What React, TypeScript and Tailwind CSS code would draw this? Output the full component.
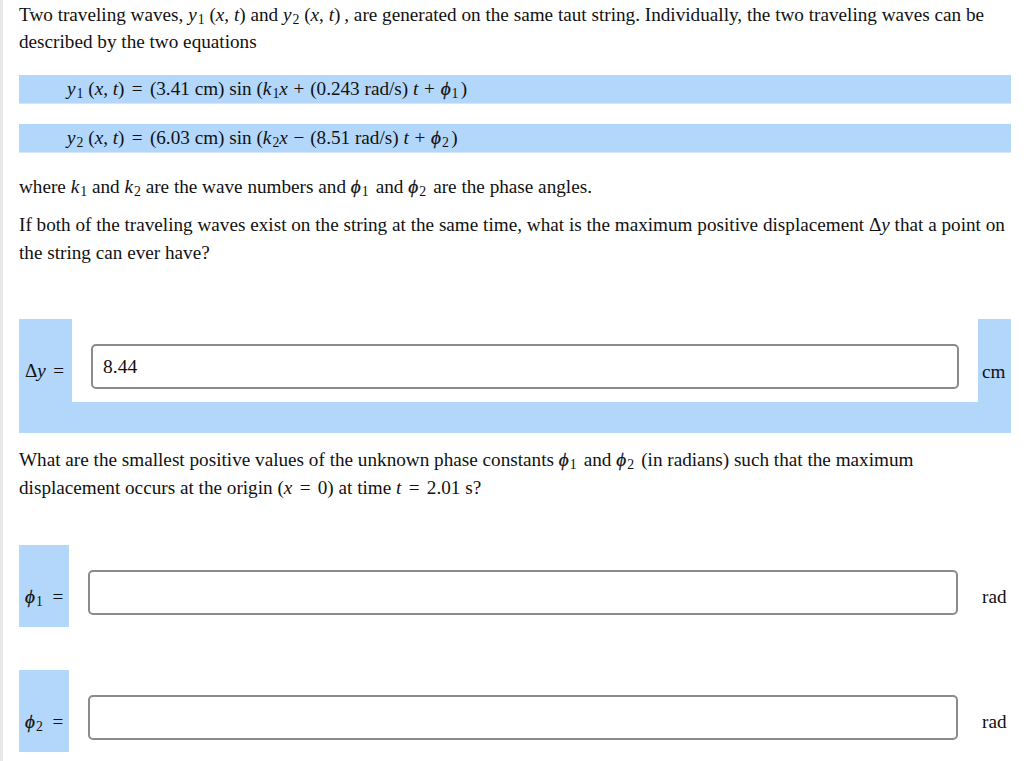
import React from 'react';

const I = ({ children }: { children: React.ReactNode }) => <i className="italic">{children}</i>;

const Sub = ({ children }: { children: React.ReactNode }) => (
  <sub className="text-[0.72em] not-italic ml-px">{children}</sub>
);

// relation / binary operator spacing like typeset math
const Rel = ({ children }: { children: React.ReactNode }) => <span className="mx-[0.38em]">{children}</span>;
const Bin = ({ children }: { children: React.ReactNode }) => <span className="mx-[0.3em]">{children}</span>;

const Phi = ({ n }: { n: string }) => (
  <span className="pr-[0.12em]">
    <i className="italic [-webkit-text-stroke:0.3px_currentColor]">ϕ</i>
    <Sub>{n}</Sub>
  </span>
);

const Yn = ({ n }: { n: string }) => (
  <span>
    <I>y</I>
    <Sub>{n}</Sub>
  </span>
);

const Kn = ({ n }: { n: string }) => (
  <span>
    <I>k</I>
    <Sub>{n}</Sub>
  </span>
);

const AnswerInput = ({ value }: { value?: string }) => (
  <input
    defaultValue={value}
    className="w-full h-[45px] border-2 border-[#8b8b8b] rounded-[5px] pl-[10px] text-[19.5px] text-[#111] bg-white outline-none font-['Liberation_Serif',serif]"
  />
);

export default function App() {
  return (
    <div className="min-h-[761px] bg-white border-l-[3px] border-[#e8e8e8] pl-4 pr-[13px] pt-px font-['Liberation_Serif','DejaVu_Serif',serif] text-[19.2px] leading-[27px] text-[#111]">
      <p>
        Two traveling waves, <Yn n="1" /> (<I>x</I>, <I>t</I>) and <Yn n="2" /> (<I>x</I>, <I>t</I>)&thinsp;, are
        generated on the same taut string. Individually, the two traveling waves can be described by the two equations
      </p>

      <div className="mt-5 h-[29px] bg-[#b3d7fb] border-b border-[#d3e6fb] pl-12 leading-[28px]">
        <Yn n="1" /> (<I>x</I>, <I>t</I>)<Rel>=</Rel>(3.41 cm) sin (<Kn n="1" />
        <I>x</I>
        <Bin>+</Bin>(0.243 rad/s) <I>t</I>
        <Bin>+</Bin>
        <Phi n="1" />)
      </div>

      <div className="mt-5 h-[29px] bg-[#b3d7fb] border-b border-[#d3e6fb] pl-12 leading-[28px]">
        <Yn n="2" /> (<I>x</I>, <I>t</I>)<Rel>=</Rel>(6.03 cm) sin (<Kn n="2" />
        <I>x</I>
        <Bin>−</Bin>(8.51 rad/s) <I>t</I>
        <Bin>+</Bin>
        <Phi n="2" />)
      </div>

      <p className="mt-5">
        where <Kn n="1" /> and <Kn n="2" /> are the wave numbers and <Phi n="1" /> and <Phi n="2" /> are the phase angles.
      </p>

      <p className="mt-[11px] leading-[27.5px]">
        If both of the traveling waves exist on the string at the same time, what is the maximum positive displacement
        Δ<I>y</I> that a point on the string can ever have?
      </p>

      <div className="mt-[53px] bg-[#b3d7fb]">
        <div className="flex h-[83px]">
          <div className="w-[53px] shrink-0 flex items-end pb-[18px] pl-[6px]">
            Δ<I>y</I>
            <Rel>=</Rel>
          </div>
          <div className="flex-1 bg-white px-[19px] pt-[25px]">
            <AnswerInput value="8.44" />
          </div>
          <div className="w-[33px] shrink-0 flex items-end pb-[17px] pl-[4px]">cm</div>
        </div>
        <div className="h-[31px]" />
      </div>

      <p className="mt-[13px] leading-[28px]">
        What are the smallest positive values of the unknown phase constants <Phi n="1" /> and <Phi n="2" /> (in
        radians) such that the maximum displacement occurs at the origin (<I>x</I>
        <Rel>=</Rel>0) at time <I>t</I>
        <Rel>=</Rel>2.01 s?
      </p>

      {['1', '2'].map((n) => (
        <div key={n} className="mt-[43px] flex h-[82px]">
          <div className="w-[50px] shrink-0 bg-[#b3d7fb] flex items-end pb-[17px] pl-[6px]">
            <Phi n={n} />
            <Rel>=</Rel>
          </div>
          <div className="flex-1 pl-[19px] pt-[25px]">
            <AnswerInput />
          </div>
          <div className="w-[53px] shrink-0 flex items-end pb-[17px] pl-[24px]">rad</div>
        </div>
      ))}
    </div>
  );
}
